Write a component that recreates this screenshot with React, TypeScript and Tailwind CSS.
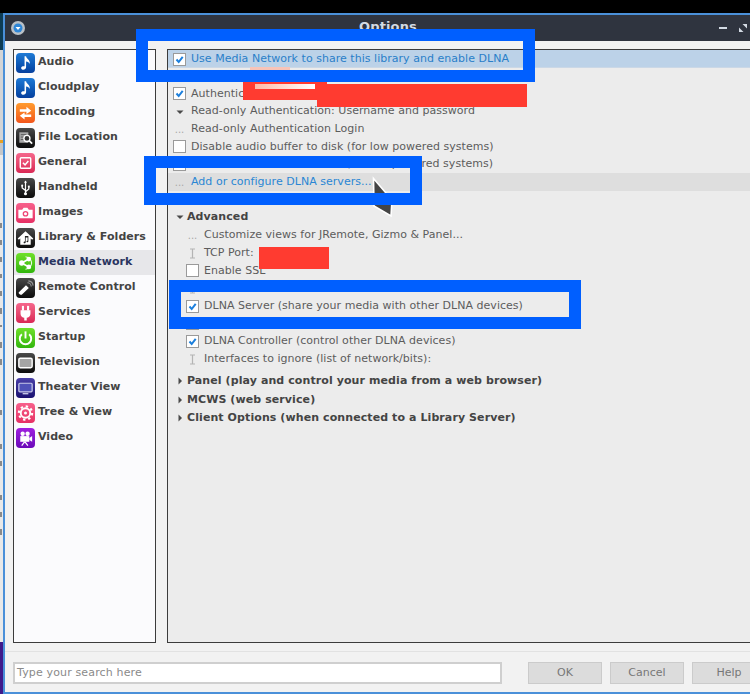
import type { ReactNode } from 'react';

const Glyph = ({ children }: { children: ReactNode }) => (
  <svg viewBox="0 0 20 20" className="h-[20px] w-[19px]">
    {children}
  </svg>
);

const note = (
  <Glyph>
    <path d="M9 3 H10.6 C11 6 15 6.5 14.5 11 C13.8 9.5 12.5 8.6 10.6 8.4 V14.5 C10.6 16.5 8.5 17.5 6.8 17 C5 16.4 5 14.6 6.4 13.8 C7.2 13.3 8.2 13.2 9 13.5 Z" fill="#ffffff" />
  </Glyph>
);

const sidebarItems = [
  { label: 'Audio', bg: 'from-[#1e7ad6] to-[#063f9e]', icon: note },
  { label: 'Cloudplay', bg: 'from-[#1e7ad6] to-[#063f9e]', icon: note },
  {
    label: 'Encoding',
    bg: 'from-[#ff9a2e] to-[#f2541b]',
    icon: (
      <Glyph>
        <path d="M4 6 H11 V3.5 L16 7.5 L11 11 V8.8 H4 Z" fill="#ffffff" />
        <path d="M16 11.5 H9 V9.5 L4 13 L9 16.8 V14.3 H16 Z" fill="#ffffff" />
      </Glyph>
    ),
  },
  {
    label: 'File Location',
    bg: 'from-[#4a4a4a] to-[#0c0c0c]',
    icon: (
      <Glyph>
        <rect x="3.5" y="4" width="9.5" height="11" fill="#a8a8a8" />
        <path d="M5 6.5 H11 M5 9 H9 M5 11.5 H9" stroke="#555555" strokeWidth="1" />
        <circle cx="11.5" cy="10.5" r="3.2" fill="#333333" stroke="#ffffff" strokeWidth="1.4" />
        <path d="M13.8 12.8 L17 16" stroke="#ffffff" strokeWidth="1.8" />
      </Glyph>
    ),
  },
  {
    label: 'General',
    bg: 'from-[#f5668c] to-[#d92655]',
    icon: (
      <Glyph>
        <rect x="4.5" y="4.5" width="11" height="11" rx="1" fill="none" stroke="#ffffff" strokeWidth="1.5" />
        <path d="M7.3 9.8 L9.5 12 L13 7.8" fill="none" stroke="#ffffff" strokeWidth="1.6" />
      </Glyph>
    ),
  },
  {
    label: 'Handheld',
    bg: 'from-[#4a4a4a] to-[#0c0c0c]',
    icon: (
      <Glyph>
        <path d="M10 2.5 V17 M10 12.5 L6.5 10 V8 M10 14 L13.5 11 V9" fill="none" stroke="#ffffff" strokeWidth="1.3" />
        <path d="M8.5 4.5 L10 2 L11.5 4.5 Z" fill="#ffffff" />
        <circle cx="10" cy="16" r="1.6" fill="#ffffff" />
        <circle cx="6.5" cy="7.5" r="1.1" fill="#ffffff" />
        <rect x="12.5" y="7.5" width="2" height="2" fill="#ffffff" />
      </Glyph>
    ),
  },
  {
    label: 'Images',
    bg: 'from-[#f7608c] to-[#e62e64]',
    icon: (
      <Glyph>
        <path d="M2.5 6.5 H6.5 L8 4.5 H12 L13.5 6.5 H17.5 V15.5 H2.5 Z" fill="#ffffff" />
        <circle cx="10" cy="10.8" r="3" fill="#ee4576" />
        <circle cx="10" cy="10.8" r="1.6" fill="#ffffff" />
      </Glyph>
    ),
  },
  {
    label: 'Library & Folders',
    bg: 'from-[#4a4a4a] to-[#0c0c0c]',
    icon: (
      <Glyph>
        <path d="M1.8 10.5 L10 3 L18.2 10.5 L17 11.8 L15.5 10.5 V17 H4.5 V10.5 L3 11.8 Z" fill="#ffffff" />
        <path d="M9.4 8 H13 V13.5 C13 14.8 11 15 11 13.8 C11 13 11.8 12.7 12.2 12.8 V9.5 H10.2 V14.5 C10.2 15.8 8 16 8 14.7 C8 13.9 8.8 13.6 9.4 13.8 Z" fill="#222222" />
      </Glyph>
    ),
  },
  {
    label: 'Media Network',
    bg: 'from-[#6fe02a] to-[#2fb50c]',
    active: true,
    icon: (
      <Glyph>
        <circle cx="6" cy="10" r="2.8" fill="#ffffff" />
        <circle cx="13.5" cy="5.8" r="2.5" fill="#ffffff" />
        <circle cx="13.5" cy="14.2" r="2.5" fill="#ffffff" />
        <path d="M6 10 L13.5 5.8 M6 10 L13.5 14.2" stroke="#ffffff" strokeWidth="1.6" />
        <path d="M10 3.5 A7 7 0 0 1 16.5 10 A7 7 0 0 1 10 16.5" fill="none" stroke="#ffffff" strokeWidth="1" />
      </Glyph>
    ),
  },
  {
    label: 'Remote Control',
    bg: 'from-[#4a4a4a] to-[#0c0c0c]',
    icon: (
      <Glyph>
        <path d="M3 14.5 L10.5 7.2 L13.5 10 L6 17 C5 18 2 15.5 3 14.5 Z" fill="#ffffff" />
        <path d="M12 4.5 A4 4 0 0 1 16 8.5 M13 2.5 A5.5 5.5 0 0 1 18 7.5" fill="none" stroke="#9a9a9a" strokeWidth="1.1" />
      </Glyph>
    ),
  },
  {
    label: 'Services',
    bg: 'from-[#f5668c] to-[#d92655]',
    icon: (
      <Glyph>
        <rect x="6.2" y="2.5" width="2.2" height="5" fill="#ffffff" />
        <rect x="11.6" y="2.5" width="2.2" height="5" fill="#ffffff" />
        <path d="M4.8 7 H15.2 V11 C15.2 13.5 13 14.8 11.3 15 V18 H8.7 V15 C7 14.8 4.8 13.5 4.8 11 Z" fill="#ffffff" />
      </Glyph>
    ),
  },
  {
    label: 'Startup',
    bg: 'from-[#6fe02a] to-[#2fb50c]',
    icon: (
      <Glyph>
        <path d="M6.2 6 A6 6 0 1 0 13.8 6" fill="none" stroke="#ffffff" strokeWidth="2" />
        <path d="M10 3 V10.5" stroke="#ffffff" strokeWidth="2" />
      </Glyph>
    ),
  },
  {
    label: 'Television',
    bg: 'from-[#4a4a4a] to-[#0c0c0c]',
    icon: (
      <Glyph>
        <rect x="3" y="5" width="14" height="10" rx="1.5" fill="#a5a5a5" stroke="#ffffff" strokeWidth="1.5" />
      </Glyph>
    ),
  },
  {
    label: 'Theater View',
    bg: 'from-[#4a3fa8] to-[#1a0f70]',
    icon: (
      <Glyph>
        <rect x="3" y="5" width="14" height="9" rx="1" fill="#4f51b8" stroke="#c9c9ea" strokeWidth="1.3" />
        <path d="M7 16 H13" stroke="#c9c9ea" strokeWidth="1.4" />
      </Glyph>
    ),
  },
  {
    label: 'Tree & View',
    bg: 'from-[#f7608c] to-[#e62e64]',
    icon: (
      <Glyph>
        <circle cx="10" cy="10" r="5" fill="none" stroke="#ffffff" strokeWidth="2" />
        <circle cx="10" cy="10" r="7" fill="none" stroke="#ffffff" strokeWidth="2.2" strokeDasharray="2.5 3" />
        <circle cx="10" cy="10" r="1.6" fill="#ffffff" />
      </Glyph>
    ),
  },
  {
    label: 'Video',
    bg: 'from-[#a01ee0] to-[#6a08b8]',
    icon: (
      <Glyph>
        <circle cx="7" cy="5.5" r="2.3" fill="#ffffff" />
        <circle cx="12.2" cy="5.5" r="2.3" fill="#ffffff" />
        <rect x="4.5" y="8" width="9.5" height="6" fill="#ffffff" />
        <path d="M14 10 L17 8 V14 L14 12 Z" fill="#ffffff" />
        <path d="M9 14 L6 18 M9.5 14 L12.5 18" stroke="#ffffff" strokeWidth="1.3" />
      </Glyph>
    ),
  },
];

const Checkbox = ({ checked = false }: { checked?: boolean }) => (
  <span className="flex h-[13px] w-[13px] shrink-0 items-center justify-center border border-[#9a9a9a] bg-white">
    {checked && (
      <svg viewBox="0 0 11 11" className="h-[11px] w-[11px]">
        <path d="M2.5 5.5 L4.7 8 L8.7 2.8" fill="none" stroke="#1c7fdc" strokeWidth="2" />
      </svg>
    )}
  </span>
);

const Dots = () => (
  <span className="flex h-[13px] w-[13px] shrink-0 items-end justify-center pb-[1px] text-[#a8a8a8]">
    <span className="text-[10px] leading-none">...</span>
  </span>
);

const Beam = () => (
  <span className="flex h-[13px] w-[13px] shrink-0 items-center justify-center">
    <svg viewBox="0 0 9 11" className="h-[11px] w-[9px]">
      <path d="M2 1 H7 M4.5 1 V10 M2 10 H7" fill="none" stroke="#b4b4b4" strokeWidth="1.2" />
    </svg>
  </span>
);

const Caret = ({ open = false, wide = false }: { open?: boolean; wide?: boolean }) => (
  <span className={`flex h-[13px] shrink-0 items-center justify-center ${wide ? 'w-[13px]' : 'w-[9px]'}`}>
    <svg viewBox="0 0 8 8" className="h-[8px] w-[8px]">
      {open ? <path d="M0.5 2.5 H7.5 L4 6 Z" fill="#4a4a4a" /> : <path d="M2.5 0.5 V7.5 L6 4 Z" fill="#4a4a4a" />}
    </svg>
  </span>
);

const Row = ({
  icon,
  children,
  indent = false,
  className = '',
}: {
  icon?: ReactNode;
  children?: ReactNode;
  indent?: boolean;
  className?: string;
}) => (
  <div className={`flex h-[17.7px] items-center gap-[5px] text-[11px] tracking-[0.03px] text-[#5c5c5c] ${indent ? 'pl-[18px]' : 'pl-[5px]'} ${className}`}>
    {icon}
    <span className="whitespace-nowrap">{children}</span>
  </div>
);

const Heading = ({ open = false, children }: { open?: boolean; children: ReactNode }) => (
  <div className="flex h-[18.5px] items-center gap-[3px] pl-[7px] text-[11px] font-bold tracking-[0.09px] text-[#444444]">
    <Caret open={open} />
    <span className="whitespace-nowrap">{children}</span>
  </div>
);

const Sidebar = () => (
  <div className="h-[594px] w-[143px] shrink-0 border border-[#3c3c3c] bg-[#fbfbfd]">
    {sidebarItems.map((item) => (
      <div key={item.label} className={`flex h-[25px] items-center gap-[3px] pl-[2px] ${item.active ? 'bg-[#e7e7ea]' : ''}`}>
        <span className={`flex h-[20px] w-[19px] shrink-0 items-center justify-center rounded-[4px] bg-linear-to-b ${item.bg}`}>
          {item.icon}
        </span>
        <span className={`whitespace-nowrap text-[11px] font-bold tracking-[0.05px] ${item.active ? 'text-[#2a3560]' : 'text-[#444444]'}`}>
          {item.label}
        </span>
      </div>
    ))}
  </div>
);

const Content = () => (
  <div className="h-[594px] min-w-0 flex-1 overflow-hidden border-t border-l border-b border-[#3c3c3c] bg-[#ececec]">
    <Row icon={<Checkbox checked />} className="h-[18px] border-b border-[#cbd8e6] bg-[#bcd2e8] pt-[1px]">
      <span className="text-[#2a7fc9]">Use Media Network to share this library and enable DLNA</span>
    </Row>
    <div className="h-[17px]" />
    <Row icon={<Checkbox checked />}>Authentication</Row>
    <Row icon={<Caret open wide />}>Read-only Authentication: Username and password</Row>
    <Row icon={<Dots />}>Read-only Authentication Login</Row>
    <Row icon={<Checkbox />}>Disable audio buffer to disk (for low powered systems)</Row>
    <Row icon={<Checkbox />}>Disable video buffer to disk (for low powered systems)</Row>
    <Row icon={<Dots />} className="bg-[#dedede]">
      <span className="text-[#2a86d4]">Add or configure DLNA servers...</span>
    </Row>
    <div className="h-[17px]" />
    <Heading open>Advanced</Heading>
    <Row indent icon={<Dots />}>Customize views for JRemote, Gizmo &amp; Panel...</Row>
    <Row indent icon={<Beam />}>TCP Port:</Row>
    <Row indent icon={<Checkbox />}>Enable SSL</Row>
    <Row indent icon={<Beam />} />
    <Row indent icon={<Checkbox checked />}>DLNA Server (share your media with other DLNA devices)</Row>
    <Row indent icon={<Checkbox />} />
    <Row indent icon={<Checkbox checked />}>DLNA Controller (control other DLNA devices)</Row>
    <Row indent icon={<Beam />}>Interfaces to ignore (list of network/bits):</Row>
    <div className="h-[4px]" />
    <Heading>Panel (play and control your media from a web browser)</Heading>
    <Heading>MCWS (web service)</Heading>
    <Heading>Client Options (when connected to a Library Server)</Heading>
  </div>
);

const Footer = () => (
  <div className="mt-[8px] flex gap-[26px] border-t border-[#e2e2e2] pt-[10px] pl-[8px]">
    <div className="flex h-[22px] w-[489px] shrink-0 items-center border-2 border-[#cfcfcf] bg-white px-[2px] text-[11px] tracking-[0.15px] text-[#8a8a8a]">
      Type your search here
    </div>
    <div className="flex gap-[8px]">
      {['OK', 'Cancel', 'Help'].map((label) => (
        <div
          key={label}
          className="flex h-[22px] w-[74px] shrink-0 items-center justify-center border border-[#cbcbcb] bg-[#dcdcdc] text-[11px] text-[#777777]"
        >
          {label}
        </div>
      ))}
    </div>
  </div>
);

// slivers of the window behind: only the ends of its text lines show
const stripMarks = [5, 5, 5, 4, 5, 6, 2, 6, 6, 0, 0, 5, 0, 5, 5, 0, 5, 5, 6];

const DesktopStrip = () => (
  <div className="flex w-[3px] shrink-0 flex-col overflow-hidden bg-[#e6e6e6]">
    <div className="h-[37px] shrink-0 bg-[#0d3c54]" />
    <div className="h-[90px] shrink-0 bg-[#d3d5d7]" />
    <div className="h-[3px] shrink-0 bg-[#e8a020]" />
    <div className="h-[12px] shrink-0 bg-[#c4c6c8]" />
    <div className="min-h-0 flex-1 overflow-hidden bg-[#e9e9e9] pt-[68px]">
      {stripMarks.map((size, i) => (
        <div key={i} className="h-[17px]">
          {size > 0 && <div className="w-[2px] bg-[#8a8a8a]" style={{ height: size }} />}
        </div>
      ))}
    </div>
    <div className="h-[52px] shrink-0 bg-[#3f1a8a]" />
  </div>
);

// annotations drawn on the screenshot, above the window
const Markup = () => (
  <>
    <div className="absolute top-[82px] left-[243px] h-[18px] w-[84px] bg-[#ff3b30]" />
    <div className="absolute top-[84px] left-[255px] h-[5px] w-[60px] bg-linear-to-r from-[#ffb9a6] to-white" />
    <div className="absolute top-[84px] left-[317px] h-[23px] w-[210px] bg-[#ff3b30]" />
    <div className="absolute top-[67px] left-[250px] h-[3px] w-[40px] bg-[#f8c4b8]" />
    <div className="absolute top-[247px] left-[259px] h-[22px] w-[70px] bg-[#ff3b30]" />
    <svg viewBox="0 0 24 44" className="absolute top-[176px] left-[371px] h-[44px] w-[24px]">
      <path d="M2.5 2.5 L21 24 L20 40 L3 30 Z" fill="#454545" stroke="#ffffff" strokeWidth="1.6" />
    </svg>
    <div className="absolute top-[29px] left-[136px] h-[53px] w-[399px] border-12 border-[#005fff]" />
    <div className="absolute top-[156px] left-[144px] h-[49px] w-[278px] border-12 border-[#005fff]" />
    <div className="absolute top-[280px] left-[169px] h-[49px] w-[412px] border-12 border-[#005fff]" />
  </>
);

const App = () => (
  <div className="relative h-[694px] w-[750px] overflow-hidden bg-black font-['DejaVu_Sans',sans-serif]">
    <div className="h-[13px]" />
    <div className="flex h-[681px]">
      <DesktopStrip />
      <div className="flex min-w-0 flex-1 flex-col border-t-2 border-b-2 border-l-2 border-[#4a90d9] bg-[#f2f2f2]">
        <div className="flex h-[26px] shrink-0 items-center bg-[#2f343f] pr-[3px] pl-[5px]">
          <svg viewBox="0 0 16 16" className="h-[16px] w-[16px]">
            <circle cx="8" cy="8" r="7" fill="#b9c0c6" />
            <circle cx="8" cy="8" r="4.5" fill="#2f86d6" />
            <path d="M5.5 7 H10.5 L8 10 Z" fill="#ffffff" />
          </svg>
          <span className="flex-1 pb-[2px] pl-[31px] text-center text-[13px] font-bold tracking-[0.15px] text-[#d3dae3]">Options</span>
          <span className="mr-[12px] h-[2px] w-[8px] bg-[#d3dae3]" />
          <svg viewBox="0 0 8 8" className="h-[8px] w-[8px]">
            <path d="M3.5 0 H8 V4.5 Z M0 3.5 V8 H4.5 Z" fill="#d3dae3" />
          </svg>
        </div>
        <div className="flex gap-[11px] pt-[8px] pl-[8px]">
          <Sidebar />
          <Content />
        </div>
        <Footer />
      </div>
    </div>
    <Markup />
  </div>
);

export default App;
